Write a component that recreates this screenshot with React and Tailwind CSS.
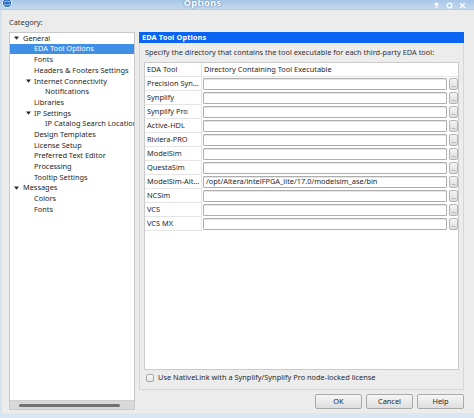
import React from "react";

const tree = [
  { t: "General", l: 0, a: true },
  { t: "EDA Tool Options", l: 1, sel: true },
  { t: "Fonts", l: 1 },
  { t: "Headers & Footers Settings", l: 1 },
  { t: "Internet Connectivity", l: 1, a: true },
  { t: "Notifications", l: 2 },
  { t: "Libraries", l: 1 },
  { t: "IP Settings", l: 1, a: true },
  { t: "IP Catalog Search Locations", l: 2 },
  { t: "Design Templates", l: 1 },
  { t: "License Setup", l: 1 },
  { t: "Preferred Text Editor", l: 1 },
  { t: "Processing", l: 1 },
  { t: "Tooltip Settings", l: 1 },
  { t: "Messages", l: 0, a: true },
  { t: "Colors", l: 1 },
  { t: "Fonts", l: 1 },
];

const tools = [
  ["Precision Syn...", ""],
  ["Synplify", ""],
  ["Synplify Pro", ""],
  ["Active-HDL", ""],
  ["Riviera-PRO", ""],
  ["ModelSim", ""],
  ["QuestaSim", ""],
  ["ModelSim-Alt...", "/opt/Altera/intelFPGA_lite/17.0/modelsim_ase/bin"],
  ["NCSim", ""],
  ["VCS", ""],
  ["VCS MX", ""],
];

const indent = ["pl-[13px]", "pl-[24px]", "pl-[35px]"];

function Arrow() {
  return (
    <svg width="5" height="4" viewBox="0 0 5 4" className="shrink-0">
      <path d="M0 0.5 L5 0.5 L2.5 3.8 Z" fill="#2a2a2a" />
    </svg>
  );
}

function Btn({ children }) {
  return (
    <div className="w-[47px] h-[15px] flex items-center justify-center rounded-[2px] border border-[#a9a9a9] bg-gradient-to-b from-[#f6f6f6] to-[#dedede] text-[#252525]">
      {children}
    </div>
  );
}

export default function App() {
  return (
    <div
      className="w-[474px] h-[418px] bg-[#ececec] overflow-hidden flex flex-col text-[7.4px] text-[#1f1f1f]"
      style={{ fontFamily: '"Noto Sans", "Open Sans", sans-serif' }}
    >
      {/* title bar */}
      <div className="h-[10px] shrink-0 bg-gradient-to-b from-[#a8c6e8] to-[#c3d8ef] flex items-start relative border-b border-[#b5cbe2]">
        <div className="w-[12px] h-[10px] pl-[2px] overflow-hidden">
          <svg width="10" height="10" viewBox="0 0 10 10" className="-mt-[2px]">
            <circle cx="5" cy="5" r="4.6" fill="#2a6fc4" stroke="#e8f0fa" strokeWidth="1" />
            <path d="M2 4 Q5 2 8 4 M2 6.5 Q5 8 8 6" stroke="#bcd8f5" strokeWidth="0.8" fill="none" />
          </svg>
        </div>
        <div className="flex-1 flex justify-center pr-[40px]">
          <span
            className="text-[9px] font-bold leading-none -mt-[2px] text-white tracking-[0.3px]"
            style={{ textShadow: "0 0 2px #3b5f8a" }}
          >
            Options
          </span>
        </div>
        <div className="flex items-center gap-[6px] pr-[8px] pt-[2px]">
          <svg width="7" height="7" viewBox="0 0 7 7">
            <path d="M3.5 1 L3.5 6 M1.5 3 L3.5 1 L5.5 3" stroke="#fff" strokeWidth="1.3" fill="none" />
          </svg>
          <svg width="7" height="7" viewBox="0 0 7 7">
            <circle cx="3.5" cy="3.5" r="2.4" stroke="#fff" strokeWidth="1.2" fill="none" />
          </svg>
          <svg width="7" height="7" viewBox="0 0 7 7">
            <path d="M1.2 1.2 L5.8 5.8 M5.8 1.2 L1.2 5.8" stroke="#fff" strokeWidth="1.3" />
          </svg>
        </div>
      </div>

      <div className="flex-1 flex flex-col border-l-2 border-[#d5e2f0] pl-[7px]">
        {/* Category label */}
        <div className="h-[22px] pt-[6px] leading-[12px] text-[#333]">Category:</div>

        <div className="flex h-[378px]">
          {/* tree */}
          <div className="w-[126px] flex flex-col bg-white border border-[#c9c9c9]">
            <div className="flex-1">
              {tree.map((n, i) => (
                <div
                  key={i}
                  className={`h-[10.7px] flex items-center whitespace-nowrap overflow-hidden ${indent[n.l]} ${
                    n.sel ? "bg-[#3f8fe6] text-white" : ""
                  }`}
                >
                  <div
                    className={
                      n.l === 0
                        ? "w-[5px] shrink-0 -ml-[9px] mr-[4px]"
                        : "w-[5px] shrink-0 -ml-[8px] mr-[3px]"
                    }
                  >
                    {n.a && <Arrow />}
                  </div>
                  <span className="shrink-0">{n.t}</span>
                </div>
              ))}
            </div>
            {/* horizontal scrollbar */}
            <div className="h-[9px] bg-[#d9d9d9] flex items-center px-[9px] border-t border-[#cfcfcf]">
              <div className="w-[101px] h-[3px] rounded-full bg-[#727272]" />
            </div>
          </div>

          {/* splitter */}
          <div className="w-[4px]" />

          {/* right panel */}
          <div className="w-[325px] flex flex-col">
            <div className="h-[11px] bg-[#0b63f2] text-white font-bold flex items-center pl-[3px] tracking-[0.1px]">
              EDA Tool Options
            </div>
            <div className="h-[347px] flex flex-col border-l border-r border-b border-[#d6d6d6] pl-[4px] pr-[4px]">
              <div className="h-[19px] flex items-center pl-[1px] pt-[1px] text-[#333]">
                Specify the directory that contains the tool executable for each third-party EDA tool:
              </div>
              <div className="h-[308px] bg-white border border-[#cacaca] flex flex-col">
                <div className="h-[14px] flex items-center">
                  <div className="w-[57px] h-full flex items-center pl-[2px] border-r border-b border-[#e4e4e4]">
                    EDA Tool
                  </div>
                  <div className="flex-1 h-full flex items-center pl-[2px] border-b border-[#e4e4e4]">
                    Directory Containing Tool Executable
                  </div>
                </div>
                {tools.map(([name, path], i) => (
                  <div key={i} className="h-[14px] flex items-center">
                    <div className="w-[57px] h-full flex items-center pl-[2px] border-r border-b border-[#e4e4e4] whitespace-nowrap overflow-hidden">
                      {name}
                    </div>
                    <div className="ml-[1px] w-[244px] h-[12px] border border-[#aeaeae] rounded-[1px] bg-white flex items-center pl-[2px] shadow-[inset_0_1px_0_#e6e6e6] whitespace-nowrap overflow-hidden">
                      {path}
                    </div>
                    <div className="ml-[2px] w-[9px] h-[12px] border border-[#b4b4b4] rounded-[2px] bg-gradient-to-b from-[#f4f4f4] to-[#dcdcdc] flex items-end justify-center text-[5px] leading-[7px] text-[#666]">
                      ...
                    </div>
                  </div>
                ))}
              </div>
              <div className="h-[16px] flex items-center pl-[2px]">
                <div className="w-[8px] h-[8px] rounded-[2px] border border-[#a8a8a8] bg-gradient-to-b from-[#fafafa] to-[#e6e6e6]" />
                <span className="ml-[4px] text-[#2a2a2a]">
                  Use NativeLink with a Synplify/Synplify Pro node-locked license
                </span>
              </div>
            </div>
            <div className="flex justify-end gap-[4px] mt-[4px]">
              <Btn>OK</Btn>
              <Btn>Cancel</Btn>
              <Btn>Help</Btn>
            </div>
          </div>
        </div>
        <div className="h-[3px]" />
      </div>
      <div className="h-[5px] shrink-0 bg-[#dae6f3]" />
    </div>
  );
}
